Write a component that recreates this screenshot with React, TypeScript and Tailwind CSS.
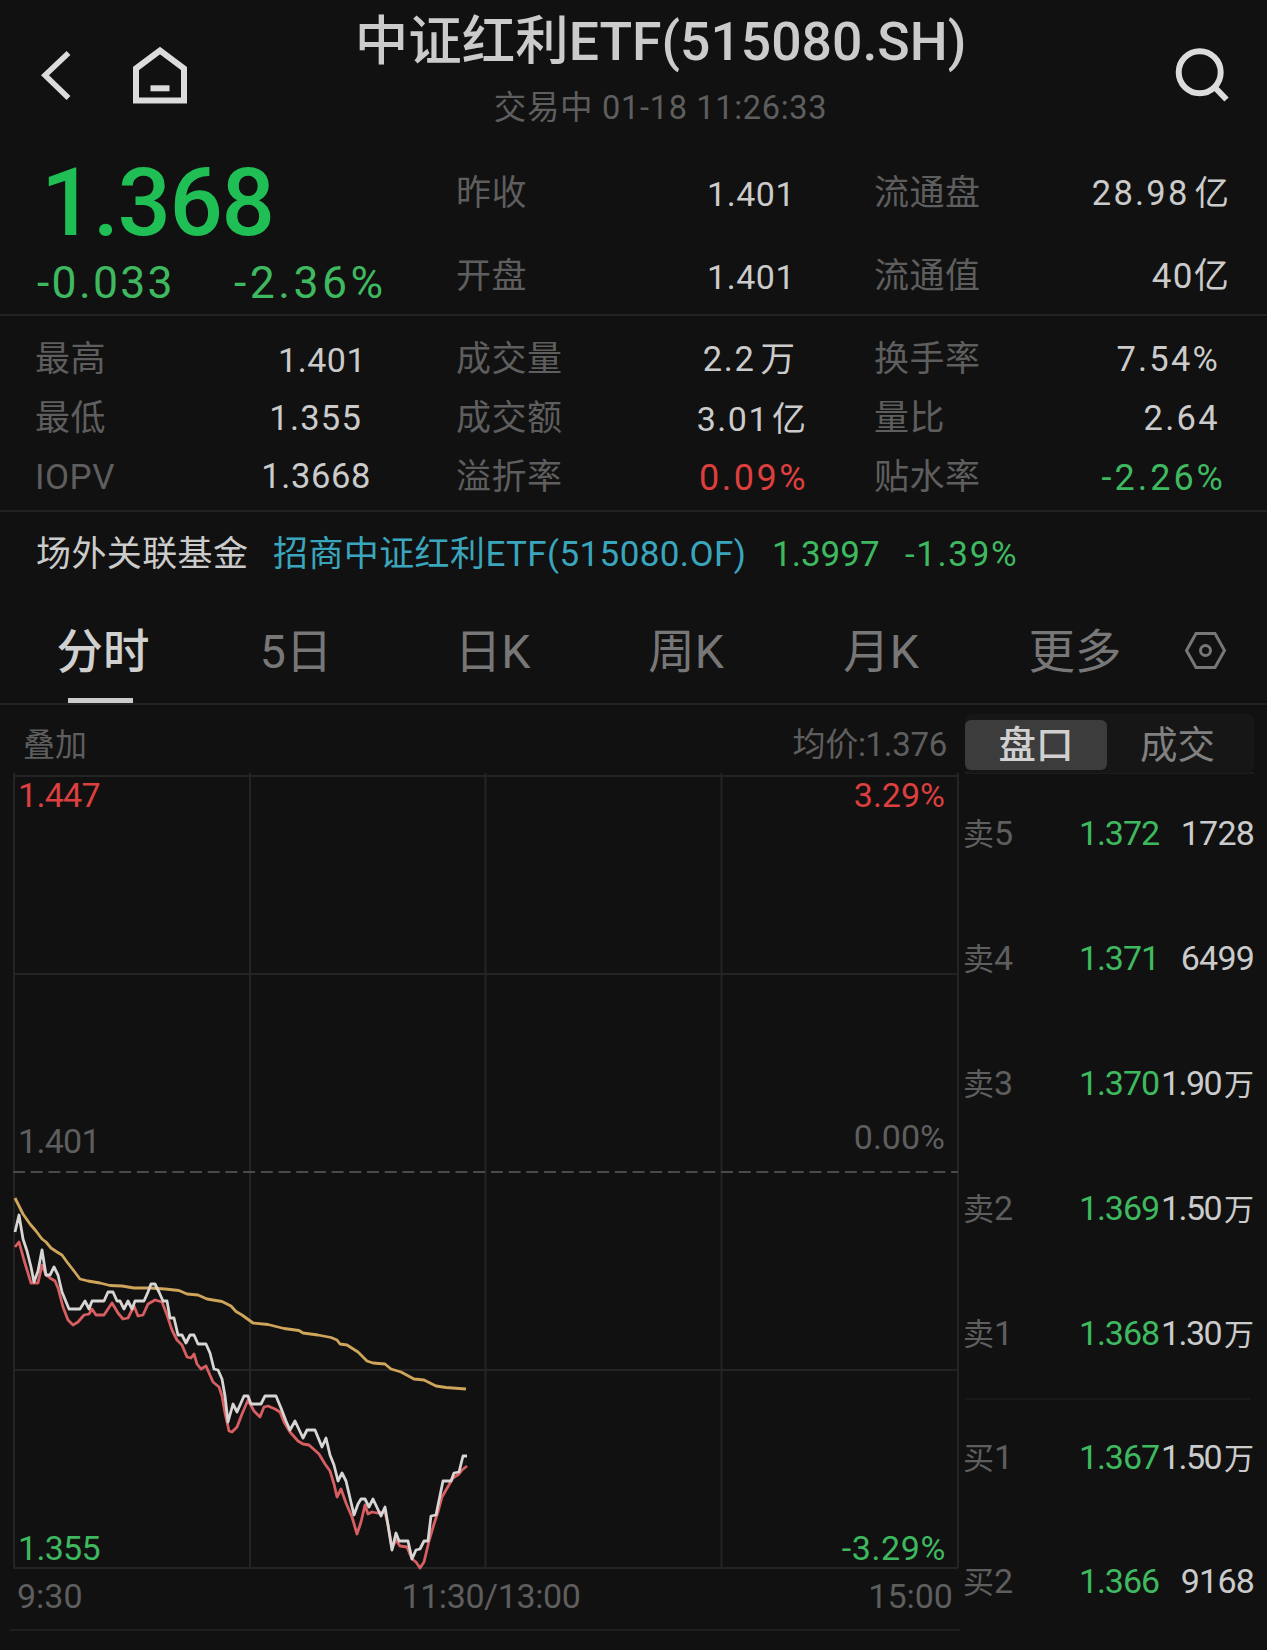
import React from "react";

type Stat = { label: string; value: React.ReactNode; cls: string };

const quoteRows: Stat[][] = [
  [
    { label: "昨收", value: "1.401", cls: "mr-[80px] tracking-[0.5px]" },
    { label: "流通盘", value: <>28.98<span className="ml-[5px] tracking-normal">亿</span></>, cls: "mr-[38px] text-[34.500px] tracking-[2.2px]" },
  ],
  [
    { label: "开盘", value: "1.401", cls: "mr-[80px] tracking-[0.5px]" },
    { label: "流通值", value: "40亿", cls: "mr-[37px] text-[35px] tracking-[1.3px]" },
  ],
];

const statRows: Stat[][] = [
  [
    { label: "最高", value: "1.401", cls: "mr-[91px] tracking-[0.5px]" },
    { label: "成交量", value: <>2.2<span className="ml-[5px] tracking-normal">万</span></>, cls: "mr-[80px] text-[34.500px] tracking-[1.6px]" },
    { label: "换手率", value: "7.54%", cls: "mr-[47px] text-[34.500px] tracking-[2.2px]" },
  ],
  [
    { label: "最低", value: "1.355", cls: "mr-[95px] text-[34.500px] tracking-[1.2px]" },
    { label: "成交额", value: <>3.01<span className="ml-[3px] tracking-normal">亿</span></>, cls: "mr-[69px] tracking-[1.5px]" },
    { label: "量比", value: "2.64", cls: "mr-[47px] text-[34.500px] tracking-[2.3px]" },
  ],
  [
    { label: "IOPV", value: "1.3668", cls: "mr-[86px] pb-[2px] text-[34.500px] tracking-[0.6px]" },
    { label: "溢折率", value: "0.09%", cls: "mr-[67px] text-[36px] tracking-[2.5px] text-[#dc3f3e]" },
    { label: "贴水率", value: "-2.26%", cls: "mr-[41px] text-[36px] tracking-[3px] text-[#3fb960]" },
  ],
];

const tabs = [
  { label: "5日", cls: "pr-[4px]" },
  { label: "日K", cls: "pl-[1px]" },
  { label: "周K", cls: "pl-[0px]" },
  { label: "月K", cls: "pl-[2px]" },
  { label: "更多", cls: "pl-[2px]" },
];

const asks = [
  ["卖", "5", "1.372", "1728", ""],
  ["卖", "4", "1.371", "6499", ""],
  ["卖", "3", "1.370", "1.90", "万"],
  ["卖", "2", "1.369", "1.50", "万"],
  ["卖", "1", "1.368", "1.30", "万"],
];
const bids = [
  ["买", "1", "1.367", "1.50", "万"],
  ["买", "2", "1.366", "9168", ""],
];

const avgLine =
  "15,1198 19,1206 23,1214 30,1224 36,1231 42,1239 46,1242 51,1248 57,1252 62,1255 67,1262 74,1271 80,1279 88,1281 100,1283 110,1285.500 122,1286 134,1288 150,1288 165,1289 179,1290.500 187,1294 198,1295 207,1299 222,1301.500 231,1306 236,1311.500 242,1315 253,1323 268,1324.500 284,1328.500 299,1330.500 303,1333 318,1335 331,1337.500 337,1340 340,1344 347,1345 358,1352 367,1361 373,1363 385,1364 391,1369 401,1372 414,1379 424,1380 436,1386 446,1387.500 466,1389";

const priceLine =
  "15,1232 19,1215 23,1239 27,1251 31,1267 34,1282 38,1271 42,1250 46,1275 50,1275 54,1267 58,1275 62,1292 69,1309 80,1309 85,1301 89,1309 92,1301 104,1301 108,1292 113,1292 117,1301 120,1301 124,1309 128,1301 132,1309 135,1301 144,1301 148,1292 151,1284 155,1284 159,1292 163,1301 167,1301 170,1318 174,1318 178,1335 182,1335 186,1343 190,1335 194,1335 198,1344 206,1344 210,1353 214,1369 218,1370 222,1379 225,1396 228,1422 233,1404 237,1412 244,1396 248,1396 251,1404 261,1404 265,1396 276,1396 281,1408 286,1421 290,1430 295,1421 303,1438 307,1430 315,1430 322,1447 326,1438 330,1455 334,1465 338,1481 342,1473 346,1481 350,1498 354,1515 358,1504 361,1499 365,1499 369,1507 373,1499 381,1516 385,1507 388,1525 392,1550 396,1533 399,1541 408,1541 412,1559 416,1550 420,1549 424,1541 428,1541 431,1516 436,1515 443,1481 451,1481 454,1473 459,1472 463,1456 467,1456";

const iopvLine =
  "15,1247 19,1242 24,1260 31,1283 38,1283 42,1265 46,1275 50,1278 55,1281 58,1288 63,1307 68,1320 73,1325 78,1322 84,1315 89,1314 92,1309 96,1315 104,1315 112,1303 118,1313 123,1319 128,1318 134,1306 138,1316 143,1315 148,1304 155,1300 162,1302 167,1315 172,1330 177,1340 182,1345 187,1357 191,1358 194,1354 197,1364 201,1369 206,1366 213,1382 219,1387 222,1396 225,1413 229,1431 232,1432 237,1427 242,1414 248,1400 254,1411 260,1417 264,1407 268,1406 275,1409 280,1412 284,1422 290,1432 298,1441 303,1444 309,1445 319,1454 325,1464 330,1471 334,1484 337,1497 341,1489 346,1503 352,1517 357,1534 361,1522 365,1505 368,1514 372,1512 377,1513 385,1512 388,1525 392,1548 396,1540 400,1546 407,1547 412,1559 416,1562 420,1568 424,1562 429,1541 434,1524 438,1512 442,1497 446,1490 453,1478 459,1474 462,1470 467,1466";

function StatCell({ stat, className }: { stat: Stat; className: string }) {
  return (
    <div className={"flex items-center justify-between " + className}>
      <span className="-ml-[1px] text-[35px] tracking-[0.5px] text-[#5e5e5e]">{stat.label}</span>
      <span className={stat.cls.includes("text-[3") ? stat.cls : "text-[34px] " + stat.cls}>{stat.value}</span>
    </div>
  );
}

function BookRow({ row, className }: { row: string[]; className: string }) {
  const [side, level, price, volume, unit] = row;
  return (
    <div className={"flex items-center whitespace-nowrap text-[34px] " + className}>
      <span className="w-[114px] shrink-0 text-[#5e5e5e]">
        <span className="-ml-[2px] text-[31px]">{side}</span>
        {level}
      </span>
      <span className="w-[80px] shrink-0 tracking-[-1.1px] text-[#3fb960]">{price}</span>
      {unit ? (
        <span className="ml-auto tracking-[-1.6px]">
          {volume}
          <span className="ml-[3px] text-[30px] tracking-normal">{unit}</span>
        </span>
      ) : (
        <span className="ml-auto tracking-[-0.8px]">{volume}</span>
      )}
    </div>
  );
}

function Chart() {
  return (
    <div className="relative h-[797px] w-[960px]">
      <svg className="block" width="960" height="797" viewBox="0 773 960 797" fill="none">
        <g stroke="#242424" strokeWidth="2">
          <path d="M14 773V1568M250 773V1568M485.500 773V1568M721.500 773V1568M958 773V1568" />
          <path d="M13 776H958M13 974H958M13 1370H958M13 1568H958" />
        </g>
        <path d="M13 1172H958" stroke="#4a4a4a" strokeWidth="2" strokeDasharray="12 5.700" />
        <g strokeWidth="2.800" strokeLinejoin="round">
          <polyline points={iopvLine} stroke="#d75f62" />
          <polyline points={avgLine} stroke="#cfa55c" />
          <polyline points={priceLine} stroke="#d8d6d4" />
        </g>
      </svg>
      <div className="absolute inset-0 text-[34px] leading-[40px]">
        <span className="absolute top-[2px] left-[18px] tracking-[-0.7px] text-[#dc3f3e]">1.447</span>
        <span className="absolute top-[2px] right-[15px] text-[#dc3f3e]">3.29%</span>
        <span className="absolute top-[348px] left-[18px] tracking-[-0.7px] text-[#5e5e5e]">1.401</span>
        <span className="absolute top-[344px] right-[15px] text-[#5e5e5e]">0.00%</span>
        <span className="absolute top-[755px] left-[18px] tracking-[-0.7px] text-[#3fb960]">1.355</span>
        <span className="absolute top-[755px] right-[14px] tracking-[0.6px] text-[#3fb960]">-3.29%</span>
      </div>
    </div>
  );
}

export default function App() {
  return (
    <div className="flex h-[1650px] w-[1267px] flex-col overflow-hidden bg-[#111111] font-[Roboto,'Noto_Sans_CJK_SC',sans-serif] leading-none text-[#cbcbcb]">
      <header className="flex h-[140px] shrink-0">
        <div className="flex w-[357px] pt-[44px] pl-[38px]">
          <svg width="36" height="64" viewBox="38 44 36 64" fill="none" stroke="#dcdcdc" strokeWidth="5.500">
            <path d="M68.500 53L45 75.300L68.500 98" />
          </svg>
          <svg className="ml-[56px]" width="60" height="64" viewBox="130 44 60 64" fill="none" stroke="#dcdcdc" strokeWidth="6">
            <path d="M136 68.500L160 50.500L184 68.500V100.500H136Z" />
            <path d="M150.500 88.300H169.500" />
          </svg>
        </div>
        <div className="flex w-[607px] flex-col items-center whitespace-nowrap pt-[12px]">
          <h1 className="text-[53.500px] leading-[60px] font-medium">中证红利ETF(515080.SH)</h1>
          <p className="mt-[16px] text-[32.500px] leading-[40px] tracking-[0.7px] text-[#5e5e5e]">交易中 01-18 11:26:33</p>
        </div>
        <svg className="mt-[44px] mr-[36px] ml-auto" width="60" height="64" viewBox="1171 44 60 64" fill="none" stroke="#dcdcdc" strokeWidth="6">
          <circle cx="1199.700" cy="72.300" r="21" />
          <path d="M1214 86.500L1226.500 99.500" />
        </svg>
      </header>

      <section className="flex h-[176px] shrink-0 border-b-2 border-[#222222]">
        <div className="w-[457px] pt-[18px] pl-[38px]">
          <div className="ml-[3px] text-[94px] leading-[90px] font-medium tracking-[-1.5px] text-[#1fbf56]">1.368</div>
          <div className="mt-[10px] flex text-[44.500px] leading-[50px] text-[#3fb960]">
            <span className="-ml-[1px] w-[197px] tracking-[2.300px]">-0.033</span>
            <span className="tracking-[3.500px]">-2.36%</span>
          </div>
        </div>
        <div className="flex-1 pt-[12px]">
          {quoteRows.map((row, i) => (
            <div key={i} className="flex h-[83px]">
              <StatCell stat={row[0]} className="w-[418px]" />
              <StatCell stat={row[1]} className="flex-1" />
            </div>
          ))}
        </div>
      </section>

      <section className="h-[196px] shrink-0 border-b-2 border-[#222222] pt-[14px]">
        {statRows.map((row, i) => (
          <div key={i} className="flex h-[59px]">
            <StatCell stat={row[0]} className="w-[457px] pl-[36px]" />
            <StatCell stat={row[1]} className="w-[418px]" />
            <StatCell stat={row[2]} className="flex-1" />
          </div>
        ))}
      </section>

      <section className="flex h-[80px] shrink-0 items-center whitespace-nowrap pt-[5px] pl-[36px] text-[35px] tracking-[0.4px]">
        <span className="w-[237px]">场外关联基金</span>
        <span className="w-[499px] text-[#3aa6bd]">招商中证红利ETF(515080.OF)</span>
        <span className="w-[133px] tracking-normal text-[#3fb960]">1.3997</span>
        <span className="tracking-[1.6px] text-[#3fb960]">-1.39%</span>
      </section>

      <nav className="flex h-[113px] shrink-0 items-center border-b-2 border-[#222222] pt-[10px] pl-[7px] text-[46.500px] text-[#777777]">
        <div className="relative flex h-full w-[194px] items-center justify-center pr-[2px] font-medium text-[#d0d0d0]">
          分时
          <span className="absolute bottom-0 left-[61px] h-[5px] w-[65px] bg-[#cbcbcb]" />
        </div>
        {tabs.map((t) => (
          <div key={t.label} className={"w-[194px] text-center " + t.cls}>{t.label}</div>
        ))}
        <svg className="mb-[3px] ml-[11px]" width="46" height="42" viewBox="1182 630 46 42" fill="none" stroke="#777777" strokeWidth="3">
          <path d="M1196 633.500H1215L1224.500 650.500L1215 667.500H1196L1186.500 650.500Z" />
          <circle cx="1205.500" cy="650.500" r="5" />
        </svg>
      </nav>

      <main className="flex flex-1">
        <section className="w-[960px]">
          <div className="flex h-[68px] items-center justify-between pt-[11px] pr-[13px] pl-[23px] text-[32px] text-[#5e5e5e]">
            <span>叠加</span>
            <span className="text-[33px] tracking-[-0.3px]">均价:1.376</span>
          </div>
          <Chart />
          <div className="ml-[10px] flex h-[61px] justify-between border-b-2 border-[#1e1e1e] pt-[6px] pr-[7px] pl-[7px] text-[34px] leading-[40px] text-[#5e5e5e]">
            <span>9:30</span>
            <span className="-mr-[31px] tracking-[-0.4px]">11:30/13:00</span>
            <span>15:00</span>
          </div>
        </section>

        <section className="w-[294px] pl-[5px]">
          <div className="flex h-[69px] items-center border-b-2 border-[#1c1c1c] pt-[10px]">
            <div className="flex h-[59px] w-[289px] items-center rounded-[6px] bg-[#161616] pt-[2px] text-[37.500px]">
              <div className="flex h-[50px] w-[142px] items-center justify-center rounded-[6px] bg-[#3c3c3c] pt-[2px] font-medium text-[#d0d0d0]">盘口</div>
              <div className="flex-1 pt-[2px] pr-[6px] text-center text-[#808080]">成交</div>
            </div>
          </div>
          <div className="-mt-[4px] mb-[3px]">
            {asks.map((r) => (
              <BookRow key={r[0] + r[1]} row={r} className="h-[125px]" />
            ))}
          </div>
          <div className="mr-[4px] border-t-2 border-[#1a1a1a]" />
          <div className="-mt-[5px]">
            {bids.map((r) => (
              <BookRow key={r[0] + r[1]} row={r} className="h-[124px]" />
            ))}
          </div>
        </section>
      </main>
    </div>
  );
}
